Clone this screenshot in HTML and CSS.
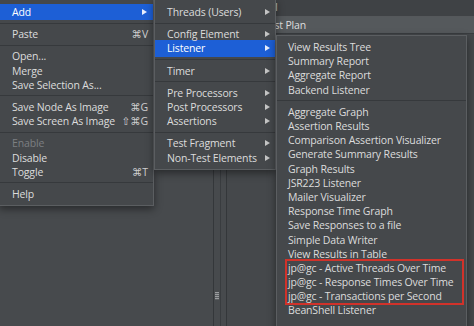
FILE: index.html
```html
<!DOCTYPE html>
<html>
  <head>
    <meta charset="utf-8">
    <title>Add Listener</title>
    <link rel="stylesheet" href="styles.css">
  </head>
  <body>
    <div class="screen">
      <div class="app">
        <div class="toolbar"><span class="toolbar-mark">I</span></div>
        <div class="workspace">
          <div class="left-pane"></div>
          <div class="splitter"><span class="grip"></span></div>
          <div class="right-pane">
            <div class="tree-row">Test Plan</div>
            <div class="tree-body"></div>
          </div>
        </div>
      </div>

      <div class="menu menu-edit">
        <div class="item active">Add<span class="arrow"></span></div>
        <div class="sep"></div>
        <div class="item">Paste<span class="key">⌘V</span></div>
        <div class="sep"></div>
        <div class="item">Open...</div>
        <div class="item">Merge</div>
        <div class="item">Save Selection As...</div>
        <div class="sep"></div>
        <div class="item">Save Node As Image<span class="key">⌘G</span></div>
        <div class="item">Save Screen As Image<span class="key">⇧⌘G</span></div>
        <div class="sep"></div>
        <div class="item disabled">Enable</div>
        <div class="item">Disable</div>
        <div class="item">Toggle<span class="key">⌘T</span></div>
        <div class="sep"></div>
        <div class="item">Help</div>
      </div>

      <div class="menu menu-add">
        <div class="item">Threads (Users)<span class="arrow"></span></div>
        <div class="sep"></div>
        <div class="item">Config Element<span class="arrow"></span></div>
        <div class="item active">Listener<span class="arrow"></span></div>
        <div class="sep"></div>
        <div class="item">Timer<span class="arrow"></span></div>
        <div class="sep"></div>
        <div class="item">Pre Processors<span class="arrow"></span></div>
        <div class="item">Post Processors<span class="arrow"></span></div>
        <div class="item">Assertions<span class="arrow"></span></div>
        <div class="sep"></div>
        <div class="item">Test Fragment<span class="arrow"></span></div>
        <div class="item">Non-Test Elements<span class="arrow"></span></div>
      </div>

      <div class="menu menu-listener">
        <div class="item">View Results Tree</div>
        <div class="item">Summary Report</div>
        <div class="item">Aggregate Report</div>
        <div class="item">Backend Listener</div>
        <div class="sep"></div>
        <div class="item">Aggregate Graph</div>
        <div class="item">Assertion Results</div>
        <div class="item">Comparison Assertion Visualizer</div>
        <div class="item">Generate Summary Results</div>
        <div class="item">Graph Results</div>
        <div class="item">JSR223 Listener</div>
        <div class="item">Mailer Visualizer</div>
        <div class="item">Response Time Graph</div>
        <div class="item">Save Responses to a file</div>
        <div class="item">Simple Data Writer</div>
        <div class="item">View Results in Table</div>
        <div class="highlight-box">
          <div class="item">jp@gc - Active Threads Over Time</div>
          <div class="item">jp@gc - Response Times Over Time</div>
          <div class="item">jp@gc - Transactions per Second</div>
        </div>
        <div class="item">BeanShell Listener</div>
      </div>
    </div>
  </body>
</html>
```

FILE: styles.css
```css
body {
  margin: 0;
  padding: 0;
  background-color: #474a4d;
  font-family: "Open Sans", "DejaVu Sans", sans-serif;
  font-size: 10.5px;
  letter-spacing: -0.15px;
  color: #dcdcdc;
}
.screen {
  position: relative;
  width: 474px;
  height: 326px;
  overflow: hidden;
}
.app {
  display: flex;
  flex-direction: column;
  height: 100%;
}
.toolbar {
  height: 16px;
  background-color: #3f4245;
  border-bottom: 1px solid #55585b;
}
.toolbar-mark {
  display: block;
  padding-left: 275px;
  line-height: 14px;
  color: #c8c8c8;
}
.workspace {
  flex: 1;
  display: flex;
}
.left-pane {
  width: 213px;
  background-color: #474a4d;
}
.splitter {
  width: 14px;
  border-left: 1px solid #34373a;
  border-right: 1px solid #34373a;
  background: linear-gradient(to right, transparent 6px, #393c3f 6px, #393c3f 7px, transparent 7px);
  display: flex;
  flex-direction: column;
  justify-content: flex-end;
  align-items: flex-start;
  padding-bottom: 26px;
  box-sizing: border-box;
}
.grip {
  display: block;
  width: 4px;
  height: 8px;
  margin-left: 1px;
  background: repeating-linear-gradient(to bottom, #9a9c9e 0, #9a9c9e 1px, #5c5f62 1px, #5c5f62 2px);
}
.right-pane {
  flex: 1;
  display: flex;
  flex-direction: column;
}
.tree-row {
  height: 16px;
  line-height: 16px;
  padding-left: 36px;
  background-color: #55595c;
  border-bottom: 1px solid #3a3d40;
  color: #dedede;
}
.tree-body {
  flex: 1;
  background-color: #45484b;
}

.menu {
  position: absolute;
  background-color: #45484b;
  border: 1px solid #5b5e61;
  box-shadow: 0 3px 8px rgba(0, 0, 0, 0.45);
  padding: 4px 0;
}
.menu-edit {
  left: -1px;
  top: -1px;
  width: 153px;
  padding-top: 5px;
}
.menu-add {
  left: 154px;
  top: -1px;
  width: 120px;
  padding-top: 5px;
}
.menu-listener {
  left: 276px;
  top: 35px;
  width: 189px;
  height: 320px;
}
.item {
  display: flex;
  align-items: center;
  justify-content: space-between;
  height: 14.2px;
  white-space: nowrap;
}
.menu-edit .item {
  padding: 0 5px 0 12px;
}
.menu-add .item {
  padding: 0 4px 0 12px;
}
.menu-listener .item {
  padding: 0 4px 0 11px;
}
.item.active {
  background-color: #1d5fd6;
  box-shadow: 0 -1px 0 #1d5fd6, 0 1px 0 #1d5fd6;
  color: #ffffff;
}
.item.disabled {
  color: #7c7f82;
}
.key {
  color: #cfcfcf;
}
.arrow {
  width: 0;
  height: 0;
  border-top: 3px solid transparent;
  border-bottom: 3px solid transparent;
  border-left: 5px solid #c4c4c4;
  margin-right: 1px;
}
.item.active .arrow {
  border-left-color: #e8eefc;
}
.sep {
  height: 1px;
  margin: 3.5px 0;
  background-color: #36393c;
}
.highlight-box {
  border: 2px solid #d1322a;
  margin: -2px 2px -2px 8px;
}
.menu-listener .highlight-box .item {
  padding-left: 1px;
}
```
